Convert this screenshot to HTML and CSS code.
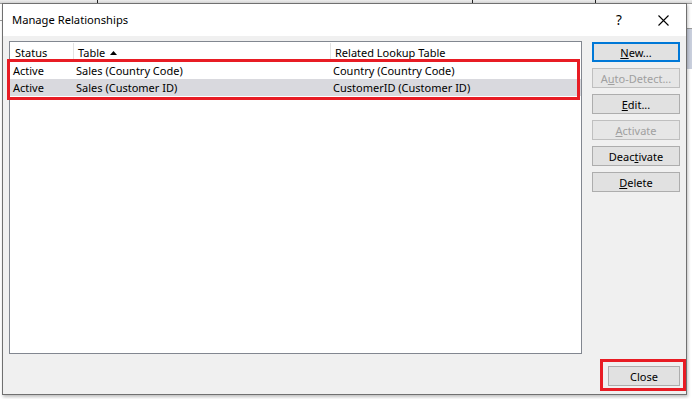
FILE: index.html
```html
<!DOCTYPE html>
<html>
<head>
<meta charset="utf-8">
<link rel="stylesheet" href="styles.css">
</head>
<body>
<div class="desk">
  <div class="sheet-top">
    <span class="vline" style="left:97px"></span>
    <span class="vline" style="left:472px"></span>
    <span class="vline" style="left:595px"></span>
  </div>
  <span class="hline left-line"></span>
  <span class="hline right-line"></span>
  <div class="right-band"></div>

  <div class="dialog">
    <div class="titlebar">
      <span class="title">Manage Relationships</span>
      <span class="help">?</span>
      <span class="close-x">
        <svg width="11" height="11" viewBox="0 0 11 11"><path d="M0.5 0.5 L10.5 10.5 M10.5 0.5 L0.5 10.5" stroke="#000" stroke-width="1.1" fill="none"/></svg>
      </span>
    </div>
    <div class="content">
      <div class="main">
        <div class="list">
          <div class="row head">
            <div class="c1">Status</div>
            <div class="c2">Table <svg class="sort" width="7" height="4" viewBox="0 0 7 4"><path d="M0 4 L3.5 0 L7 4 Z" fill="#000"/></svg></div>
            <div class="c3">Related Lookup Table</div>
          </div>
          <div class="row">
            <div class="c1">Active</div>
            <div class="c2">Sales (Country Code)</div>
            <div class="c3">Country (Country Code)</div>
          </div>
          <div class="row sel">
            <div class="c1">Active</div>
            <div class="c2">Sales (Customer ID)</div>
            <div class="c3">CustomerID (Customer ID)</div>
          </div>
        </div>
        <div class="buttons">
          <div class="btn default"><u>N</u>ew...</div>
          <div class="btn disabled">A<u>u</u>to-Detect...</div>
          <div class="btn"><u>E</u>dit...</div>
          <div class="btn disabled"><u>A</u>ctivate</div>
          <div class="btn">Deac<u>t</u>ivate</div>
          <div class="btn"><u>D</u>elete</div>
        </div>
      </div>
      <div class="footer">
        <div class="btn close">Close</div>
      </div>
    </div>
  </div>
  <div class="mark mark-rows"></div>
  <div class="mark mark-close"></div>
</div>
</body>
</html>
```
FILE: styles.css
```css
html, body {
  margin: 0;
  padding: 0;
}
body {
  width: 692px;
  height: 399px;
  overflow: hidden;
  background: #ffffff;
  font-family: "Noto Sans", "Open Sans", sans-serif;
  font-size: 11px;
  color: #000;
}
.desk {
  position: relative;
  width: 692px;
  height: 399px;
}
.sheet-top {
  position: absolute;
  left: 0;
  top: 0;
  width: 692px;
  height: 3px;
  background: linear-gradient(#ececec, #d6d6d6);
  border-bottom: 1px solid #9a9a9a;
}
.vline {
  position: absolute;
  top: 0;
  width: 1px;
  height: 4px;
  background: #222;
}
.hline {
  position: absolute;
  height: 1px;
  background: #9a9a9a;
}
.left-line {
  left: 0;
  top: 20px;
  width: 3px;
}
.right-line {
  left: 686px;
  top: 28px;
  width: 6px;
}
.right-band {
  position: absolute;
  left: 686px;
  top: 29px;
  width: 6px;
  height: 40px;
  background: #c9cfdd;
}
.dialog {
  position: absolute;
  left: 2px;
  top: 3px;
  width: 685px;
  height: 392px;
  box-sizing: border-box;
  border: 1px solid #707070;
  background: #f0f0f0;
  box-shadow: 1px 2px 3px rgba(0, 0, 0, 0.25);
  display: flex;
  flex-direction: column;
}
.titlebar {
  height: 32px;
  background: #ffffff;
  display: flex;
  align-items: center;
  flex: none;
}
.title {
  margin-left: 9px;
  font-size: 11.2px;
  flex: 1;
  padding-bottom: 1px;
}
.help {
  font-size: 13.5px;
  width: 12px;
  margin-right: 33px;
  text-align: center;
}
.close-x {
  width: 11px;
  height: 11px;
  margin-right: 17px;
  display: flex;
}
.content {
  flex: 1;
  display: flex;
  flex-direction: column;
  padding: 5px 5px 8px 6px;
}
.main {
  display: flex;
  height: 313px;
  gap: 10px;
}
.list {
  width: 573px;
  height: 313px;
  box-sizing: border-box;
  border: 1px solid #828790;
  background: #ffffff;
}
.row {
  display: flex;
  height: 17px;
  align-items: center;
}
.row.head {
  height: 20px;
}
.row.sel {
  background: #d9d9de;
}
.c1 {
  width: 63px;
  padding-left: 3px;
  box-sizing: border-box;
}
.c2 {
  width: 257px;
  padding-left: 3px;
  box-sizing: border-box;
}
.c3 {
  flex: 1;
  padding-left: 3px;
  box-sizing: border-box;
}
.head .c1 {
  padding-left: 5px;
}
.head .c2 {
  padding-left: 4px;
  border-left: 1px solid #e3e3e3;
  height: 19px;
  line-height: 19px;
}
.head .c3 {
  padding-left: 4px;
  border-left: 1px solid #e3e3e3;
  height: 19px;
  line-height: 19px;
}
.sort {
  position: relative;
  top: -2px;
  margin-left: 2px;
}
.buttons {
  display: flex;
  flex-direction: column;
  gap: 6px;
  padding-top: 1px;
}
.btn {
  width: 88px;
  height: 20px;
  box-sizing: border-box;
  border: 1px solid #adadad;
  background: #e1e1e1;
  display: flex;
  align-items: center;
  justify-content: center;
  font-size: 11px;
}
.btn.default {
  border: 2px solid #0078d7;
}
.btn.disabled {
  color: #a0a0a0;
  border-color: #bfbfbf;
  background: #e6e6e6;
}
.btn u {
  text-decoration-thickness: 1px;
  text-underline-offset: 1px;
}
.footer {
  display: flex;
  justify-content: flex-end;
  margin-top: 12px;
  padding-right: 1px;
}
.btn.close {
  width: 72px;
}
.mark {
  position: absolute;
  box-sizing: border-box;
  border: 3px solid #e81c24;
}
.mark-rows {
  left: 7px;
  top: 59px;
  width: 573px;
  height: 41px;
}
.mark-close {
  left: 600px;
  top: 359px;
  width: 86px;
  height: 32px;
}
```
